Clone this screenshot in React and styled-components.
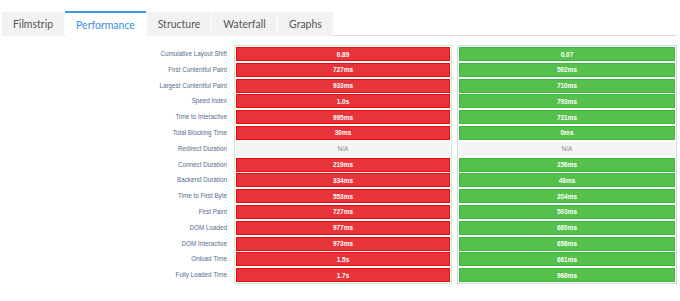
import React from "react";
import styled, { createGlobalStyle, css } from "styled-components";

const GlobalStyle = createGlobalStyle`
  html, body {
    margin: 0;
    padding: 0;
    background: #fff;
  }
`;

const metrics = [
  ["Cumulative Layout Shift", "0.89", "0.07"],
  ["First Contentful Paint", "727ms", "502ms"],
  ["Largest Contentful Paint", "933ms", "710ms"],
  ["Speed Index", "1.0s", "793ms"],
  ["Time to Interactive", "995ms", "731ms"],
  ["Total Blocking Time", "30ms", "0ms"],
  ["Redirect Duration", null, null],
  ["Connect Duration", "219ms", "156ms"],
  ["Backend Duration", "334ms", "48ms"],
  ["Time to First Byte", "553ms", "204ms"],
  ["First Paint", "727ms", "503ms"],
  ["DOM Loaded", "977ms", "660ms"],
  ["DOM Interactive", "973ms", "658ms"],
  ["Onload Time", "1.5s", "661ms"],
  ["Fully Loaded Time", "1.7s", "968ms"],
];

const tabs = [
  ["Filmstrip", 62],
  ["Performance", 81],
  ["Structure", 64],
  ["Waterfall", 65],
  ["Graphs", 55],
];

const Page = styled.div`
  width: 680px;
  height: 301px;
  padding: 11px 3px 0 2px;
  box-sizing: border-box;
  font-family: "Liberation Sans", Arial, sans-serif;
`;

const TabBar = styled.div`
  display: flex;
  gap: 1px;
  height: 25px;
  border-bottom: 1px solid #dcdcdc;
  box-sizing: border-box;
`;

const Tab = styled.div`
  display: flex;
  align-items: center;
  justify-content: center;
  width: ${({ $w }) => $w}px;
  height: 24px;
  margin-top: 1px;
  background: #f2f2f2;
  color: #555;
  font-family: Lato, "Open Sans", sans-serif;
  font-size: 10.5px;
  box-sizing: border-box;
  ${({ $active }) =>
    $active &&
    css`
      margin-top: 0;
      height: 25px;
      background: #fff;
      color: #3d8fd6;
      border-top: 2px solid #3c97dc;
    `}
`;

const Table = styled.div`
  display: grid;
  grid-template-columns: 227px 218px 220px;
  column-gap: 5px;
  margin-top: 9px;
`;

const Labels = styled.div`
  display: flex;
  flex-direction: column;
  gap: 1.8px;
  padding: 2px 2px 0 0;
`;

const Label = styled.div`
  height: 14px;
  line-height: 14px;
  text-align: right;
  font-size: 6.3px;
  color: #526d8e;
  white-space: nowrap;
`;

const Column = styled.div`
  display: flex;
  flex-direction: column;
  gap: 1.8px;
  padding: 1px;
  border: 1px solid ${({ $good }) => ($good ? "#cbd9ee" : "#d6ecd1")};
  background: #fff;
`;

const Cell = styled.div`
  height: 14px;
  box-sizing: border-box;
  display: flex;
  align-items: center;
  justify-content: center;
  font-size: 6.5px;
  font-weight: bold;
  color: #fff;
  ${({ $tone }) =>
    $tone === "bad"
      ? css`
          background: #e6343a;
          border: 1px solid #e50c12;
        `
      : $tone === "good"
      ? css`
          background: #55c04b;
          border: 1px solid #3db83a;
        `
      : css`
          background: #f5f5f5;
          color: #8a8a8a;
          font-weight: normal;
        `}
`;

export default function App() {
  return (
    <Page>
      <GlobalStyle />
      <TabBar>
        {tabs.map(([name, w]) => (
          <Tab key={name} $w={w} $active={name === "Performance"}>
            {name}
          </Tab>
        ))}
      </TabBar>
      <Table>
        <Labels>
          {metrics.map(([name]) => (
            <Label key={name}>{name}</Label>
          ))}
        </Labels>
        <Column>
          {metrics.map(([name, a]) => (
            <Cell key={name} $tone={a ? "bad" : "na"}>
              {a || "N/A"}
            </Cell>
          ))}
        </Column>
        <Column $good>
          {metrics.map(([name, , b]) => (
            <Cell key={name} $tone={b ? "good" : "na"}>
              {b || "N/A"}
            </Cell>
          ))}
        </Column>
      </Table>
    </Page>
  );
}
